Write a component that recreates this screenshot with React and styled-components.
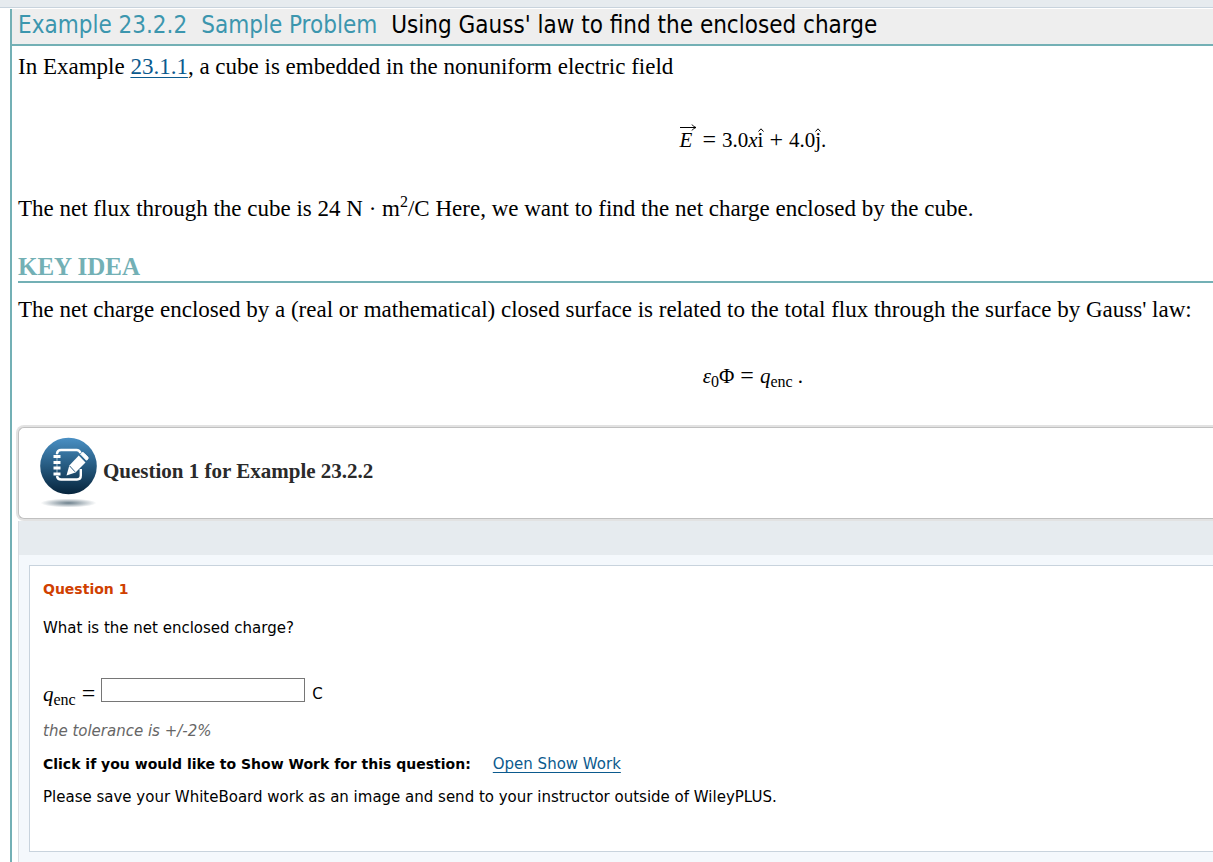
import React, { useState } from 'react';
import styled, { createGlobalStyle } from 'styled-components';

const GlobalStyle = createGlobalStyle`
  * {
    box-sizing: border-box;
  }
  body {
    margin: 0;
    background: #fff;
    color: #000;
    font-family: "Liberation Serif", "Times New Roman", serif;
    overflow-x: hidden;
  }
`;

const TopBar = styled.div`
  height: 8px;
  background: #e6ebef;
  border-bottom: 1px solid #c8d3dd;
`;

const Example = styled.article`
  margin: 1px 0 0 10px;
  border-left: 2px solid #73b0b5;
`;

const ExampleHeading = styled.h1`
  margin: 0;
  padding: 0 6px;
  height: 37px;
  line-height: 33px;
  background: #eee;
  border-bottom: 2px solid #73b0b5;
  font-family: "DejaVu Sans Condensed", Tahoma, sans-serif;
  font-size: 24px;
  font-weight: normal;
  white-space: nowrap;
`;

const Label = styled.span`
  margin-right: 14px;
  color: #3c96ae;
`;

const Body = styled.div`
  padding-left: 6px;
`;

const Paragraph = styled.p`
  margin: 0;
  padding: 8px 0;
  font-size: 23px;
  line-height: 26px;
  white-space: nowrap;

  sup {
    font-size: 16px;
    line-height: 0;
  }
`;

const Link = styled.a`
  color: #0b5a8e;
  text-decoration: underline;
  text-decoration-thickness: 1px;
  text-underline-offset: 3px;
`;

const Equation = styled.div`
  display: flex;
  align-items: center;
  justify-content: center;
  height: ${(props) => props.$height};
  padding: ${(props) => props.$space};
  font-size: 21px;
  line-height: 26px;
  white-space: nowrap;
`;

const Operator = styled.span`
  margin: 0 6px;
  font-size: 24px;
  line-height: 0;
`;

const Sub = styled.sub`
  font-size: 16px;
  line-height: 0;
  vertical-align: -4px;
`;

const Vector = styled.span`
  position: relative;
  font-style: italic;
  margin-right: 4px;

  svg {
    position: absolute;
    left: 0;
    top: -3px;
  }
`;

const Unit = styled.span`
  position: relative;

  svg {
    position: absolute;
    left: 0;
    top: 0;
  }
`;

const KeyIdea = styled.h2`
  margin: 24px 0 6px;
  padding-bottom: 1px;
  border-bottom: 2px solid #73b0b5;
  color: #73b0b5;
  font-size: 25px;
  line-height: 26px;
`;

const QuestionBar = styled.header`
  display: flex;
  align-items: center;
  height: 92px;
  padding: 0 21px;
  border: 1px solid #c0c0c0;
  border-right: 0;
  border-radius: 6px 0 0 6px;
  box-shadow: 0 0 0 2px #e2e2e2;
  background: #fff;
`;

const QuestionTitle = styled.h3`
  margin: 0 0 4px 5px;
  color: #2a2a2a;
  font-family: "Palatino Linotype", "Liberation Serif", serif;
  font-size: 21px;
  line-height: 26px;
`;

const Assignment = styled.section`
  margin-top: 2px;
  padding: 0 0 10px 10px;
  border-left: 1px solid #d9dde2;
  background: #f4f8fc;
`;

const Strip = styled.div`
  height: 34px;
  margin: 0 0 10px -10px;
  background: #e6ebef;
`;

const Panel = styled.form`
  padding: 13px 13px 31px;
  border: 1px solid #c8d3dd;
  border-right: 0;
  background: #fff;
  font-family: "DejaVu Sans", Verdana, sans-serif;
  font-size: 15px;
  line-height: 20px;
  white-space: nowrap;
`;

const PanelTitle = styled.h4`
  margin: 0 0 19px;
  color: #d04000;
  font-size: 14px;
`;

const Line = styled.p`
  margin: 0 0 13px;
`;

const Answer = styled.div`
  display: flex;
  align-items: center;
  height: 24px;
  margin: 40px 0 19px;
`;

const AnswerLabel = styled.label`
  padding-top: 8px;
  font-family: "Liberation Serif", serif;
  font-size: 21px;
`;

const AnswerInput = styled.input`
  width: 204px;
  height: 24px;
  border: 1px solid #767676;
  background: #fff;
`;

const AnswerUnit = styled.span`
  padding: 7px 0 0 7px;
`;

const Tolerance = styled(Line)`
  color: #666;
  font-style: italic;
`;

const ShowWork = styled(Line)`
  b {
    font-size: 14px;
  }
  a {
    margin-left: 22px;
  }
`;

const NotebookIcon = () => (
  <svg width="58" height="72" viewBox="0 0 58 72" aria-hidden="true">
    <defs>
      <linearGradient id="disc" x1="0" y1="0" x2="0" y2="1">
        <stop offset="0" stopColor="#4a90c4" />
        <stop offset="0.5" stopColor="#265a80" />
        <stop offset="1" stopColor="#06243c" />
      </linearGradient>
      <radialGradient id="shade">
        <stop offset="0" stopColor="#0c2c40" stopOpacity="0.6" />
        <stop offset="0.5" stopColor="#0c2c40" stopOpacity="0.3" />
        <stop offset="1" stopColor="#0c2c40" stopOpacity="0" />
      </radialGradient>
    </defs>
    <ellipse cx="28.5" cy="66" rx="28" ry="4.5" fill="url(#shade)" />
    <circle cx="28.5" cy="29" r="28.3" fill="url(#disc)" />
    <path
      d="M17 17 V16.500 Q17.500 13 21 13 H36.500 Q39.500 13 40.500 16 M40.800 32 V38.500 Q40.800 42.500 37 42.500 H21 Q17.500 42.500 17 39"
      fill="none"
      stroke="#fff"
      strokeWidth="2.4"
    />
    <path
      d="M13.500 19.500 H20.500 M13.500 25.500 H20.500 M13.500 31 H20.500 M13.500 37 H20.500"
      stroke="#fff"
      strokeWidth="3.2"
    />
    <path d="M17 17 V38" stroke="#fff" strokeWidth="2" opacity="0.3" />
    <path d="M38.800 18.500 L45.500 25.500 L35.500 35.500 L26.500 38.500 L29.300 28.500 Z" fill="#fff" />
    <path d="M29.500 28.800 L35 34.800" stroke="#2b5c80" strokeWidth="1" />
    <path d="M40.500 17 L42 15.800 Q43 15.200 44 16.200 L47.800 20 Q48.600 21 47.800 22 L46.500 23.300 Z" fill="#fff" stroke="#fff" />
  </svg>
);

const Arrow = () => (
  <svg width="17" height="7" viewBox="0 0 17 7" aria-hidden="true">
    <path d="M0 3.500 H16 M12 0.500 Q13.500 3 16 3.500 Q13.500 4 12 6.500" fill="none" stroke="#000" />
  </svg>
);

const Hat = () => (
  <svg width="6" height="4" viewBox="0 0 6 4" aria-hidden="true">
    <path d="M0.500 3.500 L3 0.800 L5.500 3.500" fill="none" stroke="#000" />
  </svg>
);

const App = () => {
  const [charge, setCharge] = useState('');

  return (
    <>
      <GlobalStyle />
      <TopBar />
      <Example>
        <ExampleHeading>
          <Label>Example 23.2.2</Label>
          <Label>Sample Problem</Label>
          Using Gauss' law to find the enclosed charge
        </ExampleHeading>
        <Body>
          <Paragraph>
            In Example <Link href="#example-23-1-1">23.1.1</Link>, a cube is embedded in the nonuniform electric field
          </Paragraph>
          <Equation $height="100px" $space="4px 0 0 23%">
            <Vector>E<Arrow /></Vector>
            <span>
              <Operator>=</Operator>3.0<i>x</i><Unit>i<Hat /></Unit>
              <Operator>+</Operator>4.0<Unit>j<Hat /></Unit>.
            </span>
          </Equation>
          <Paragraph>
            The net flux through the cube is 24 N · m<sup>2</sup>/C Here, we want to find the net charge enclosed by the cube.
          </Paragraph>
          <KeyIdea>KEY IDEA</KeyIdea>
          <Paragraph>
            The net charge enclosed by a (real or mathematical) closed surface is related to the total flux through the surface by Gauss' law:
          </Paragraph>
          <Equation $height="96px" $space="0 0 7px 23%">
            <span><i>ε</i><Sub>0</Sub>Φ<Operator>=</Operator><i>q</i><Sub>enc</Sub> .</span>
          </Equation>
          <QuestionBar>
            <NotebookIcon />
            <QuestionTitle>Question 1 for Example 23.2.2</QuestionTitle>
          </QuestionBar>
          <Assignment>
            <Strip />
            <Panel onSubmit={(e) => e.preventDefault()}>
              <PanelTitle>Question 1</PanelTitle>
              <Line>What is the net enclosed charge?</Line>
              <Answer>
                <AnswerLabel htmlFor="charge"><i>q</i><Sub>enc</Sub><Operator>=</Operator></AnswerLabel>
                <AnswerInput id="charge" type="text" value={charge} onChange={(e) => setCharge(e.target.value)} />
                <AnswerUnit>C</AnswerUnit>
              </Answer>
              <Tolerance>the tolerance is +/-2%</Tolerance>
              <ShowWork>
                <b>Click if you would like to Show Work for this question:</b>
                <Link href="#show-work">Open Show Work</Link>
              </ShowWork>
              <Line>Please save your WhiteBoard work as an image and send to your instructor outside of WileyPLUS.</Line>
            </Panel>
          </Assignment>
        </Body>
      </Example>
    </>
  );
};

export default App;
